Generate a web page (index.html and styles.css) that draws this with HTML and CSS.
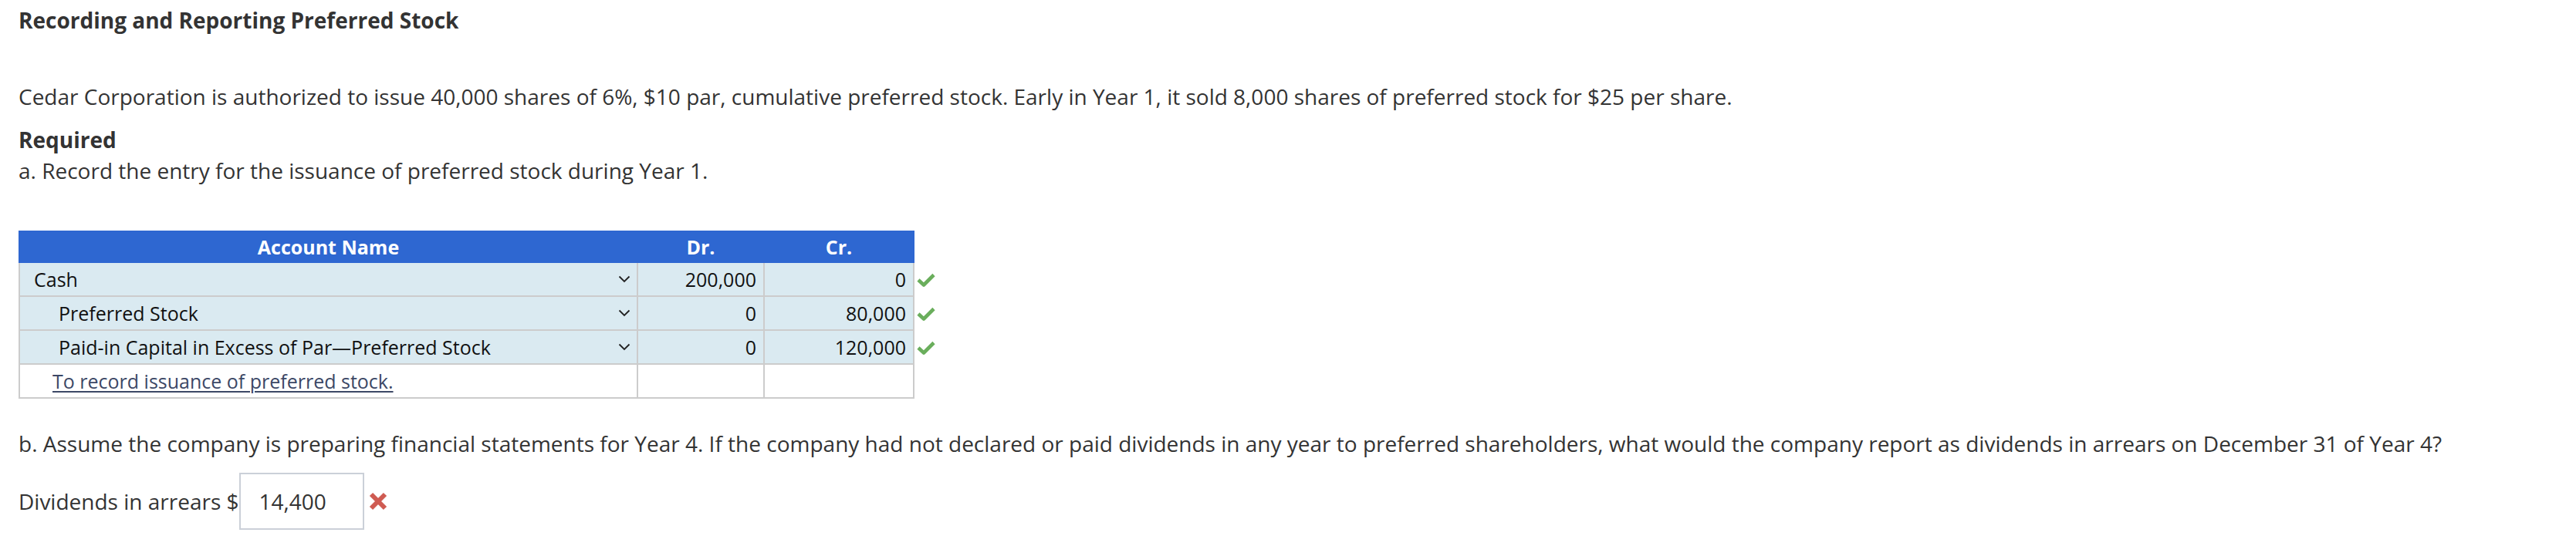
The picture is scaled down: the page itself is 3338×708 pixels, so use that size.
FILE: index.html
```html
<!DOCTYPE html>
<html lang="en">
<head>
<meta charset="utf-8">
<title>Recording and Reporting Preferred Stock</title>
<link rel="stylesheet" href="styles.css">
</head>
<body>
<main class="page">
  <h1 class="title">Recording and Reporting Preferred Stock</h1>
  <p class="intro">Cedar Corporation is authorized to issue 40,000 shares of 6%, $10 par, cumulative preferred stock. Early in Year 1, it sold 8,000 shares of preferred stock for $25 per share.</p>
  <p class="req-head">Required</p>
  <p class="req">a. Record the entry for the issuance of preferred stock during Year 1.</p>

  <table class="journal">
    <thead>
      <tr>
        <th class="col-acct">Account Name</th>
        <th class="col-dr">Dr.</th>
        <th class="col-cr">Cr.</th>
      </tr>
    </thead>
    <tbody>
      <tr class="entry">
        <td class="acct"><div class="acct-inner"><span>Cash</span><svg class="chev" viewBox="0 0 16 10" width="16" height="10"><polyline points="1.5,1.5 8,8 14.5,1.5" fill="none" stroke="#222" stroke-width="1.8"/></svg></div></td>
        <td class="num">200,000</td>
        <td class="num cr">0<svg class="mark" viewBox="0 0 24 18" width="24" height="18"><polyline points="2,9 9,15.5 22,2.5" fill="none" stroke="#6aae5c" stroke-width="4.6" stroke-linejoin="round"/></svg></td>
      </tr>
      <tr class="entry">
        <td class="acct indent"><div class="acct-inner"><span>Preferred Stock</span><svg class="chev" viewBox="0 0 16 10" width="16" height="10"><polyline points="1.5,1.5 8,8 14.5,1.5" fill="none" stroke="#222" stroke-width="1.8"/></svg></div></td>
        <td class="num">0</td>
        <td class="num cr">80,000<svg class="mark" viewBox="0 0 24 18" width="24" height="18"><polyline points="2,9 9,15.5 22,2.5" fill="none" stroke="#6aae5c" stroke-width="4.6" stroke-linejoin="round"/></svg></td>
      </tr>
      <tr class="entry">
        <td class="acct indent"><div class="acct-inner"><span>Paid-in Capital in Excess of Par—Preferred Stock</span><svg class="chev" viewBox="0 0 16 10" width="16" height="10"><polyline points="1.5,1.5 8,8 14.5,1.5" fill="none" stroke="#222" stroke-width="1.8"/></svg></div></td>
        <td class="num">0</td>
        <td class="num cr">120,000<svg class="mark" viewBox="0 0 24 18" width="24" height="18"><polyline points="2,9 9,15.5 22,2.5" fill="none" stroke="#6aae5c" stroke-width="4.6" stroke-linejoin="round"/></svg></td>
      </tr>
      <tr class="note-row">
        <td class="note"><a href="#" class="note-link">To record issuance of preferred stock.</a></td>
        <td></td>
        <td></td>
      </tr>
    </tbody>
  </table>

  <p class="part-b">b. Assume the company is preparing financial statements for Year 4. If the company had not declared or paid dividends in any year to preferred shareholders, what would the company report as dividends in arrears on December 31 of Year 4?</p>
  <div class="answer">
    <span class="answer-label">Dividends in arrears $</span>
    <span class="answer-box">14,400</span>
    <svg class="wrong" viewBox="0 0 24 24" width="24" height="24"><path d="M3 3 L21 21 M21 3 L3 21" stroke="#cf5b52" stroke-width="6" stroke-linecap="butt"/></svg>
  </div>
</main>
</body>
</html>
```

FILE: styles.css
```css
html, body {
  margin: 0;
  padding: 0;
  background: #ffffff;
}

.page {
  padding: 6px 24px 0 24px;
  font-family: "Open Sans", "Noto Sans", "Liberation Sans", sans-serif;
  color: #333333;
  font-size: 28px;
  line-height: 40px;
}

.title {
  margin: 0;
  font-size: 28px;
  font-weight: 700;
  line-height: 40px;
  color: #333333;
}

.intro {
  margin: 59px 0 0 0;
}

.req-head {
  margin: 16px 0 0 0;
  font-weight: 700;
}

.req {
  margin: 0;
}

.journal {
  margin-top: 58px;
  border-collapse: collapse;
  font-family: "Open Sans", "Noto Sans", sans-serif;
  font-size: 25px;
  color: #111111;
  table-layout: fixed;
  width: 1153px;
}

.journal th {
  background: #2e67d1;
  color: #ffffff;
  font-weight: 700;
  font-size: 25px;
  height: 38px;
  padding: 0;
  line-height: 38px;
  text-align: center;
  border: 2px solid #2e67d1;
}

.col-acct { width: 799px; }
.col-dr { width: 162px; }
.col-cr { width: 192px; }

.journal td {
  border: 2px solid #cccccc;
  height: 42px;
  padding: 0;
  line-height: 42px;
}

.entry td {
  background: #daeaf1;
}

.acct {
  padding-left: 18px !important;
  padding-right: 8px !important;
}

.acct.indent {
  padding-left: 50px !important;
}

.acct-inner {
  display: flex;
  align-items: center;
  justify-content: space-between;
}

.chev {
  display: block;
  flex: none;
}

.num {
  text-align: right;
  padding-right: 9px !important;
}

.cr {
  position: relative;
}

.mark {
  position: absolute;
  left: calc(100% + 5px);
  top: 13px;
}

.note {
  padding-left: 42px !important;
}

.note-link {
  color: #3c4866;
  text-decoration: underline;
  text-underline-offset: 3px;
  text-decoration-thickness: 2px;
}

.part-b {
  margin: 38px 0 0 0;
}

.answer {
  margin-top: 18px;
  display: flex;
  align-items: center;
}

.answer-label {
  white-space: nowrap;
}

.answer-box {
  margin-left: 0;
  box-sizing: border-box;
  width: 162px;
  height: 74px;
  border: 2px solid #cbd0d8;
  padding-left: 24px;
  display: flex;
  align-items: center;
  color: #333333;
}

.wrong {
  margin-left: 6px;
  display: block;
}
```
